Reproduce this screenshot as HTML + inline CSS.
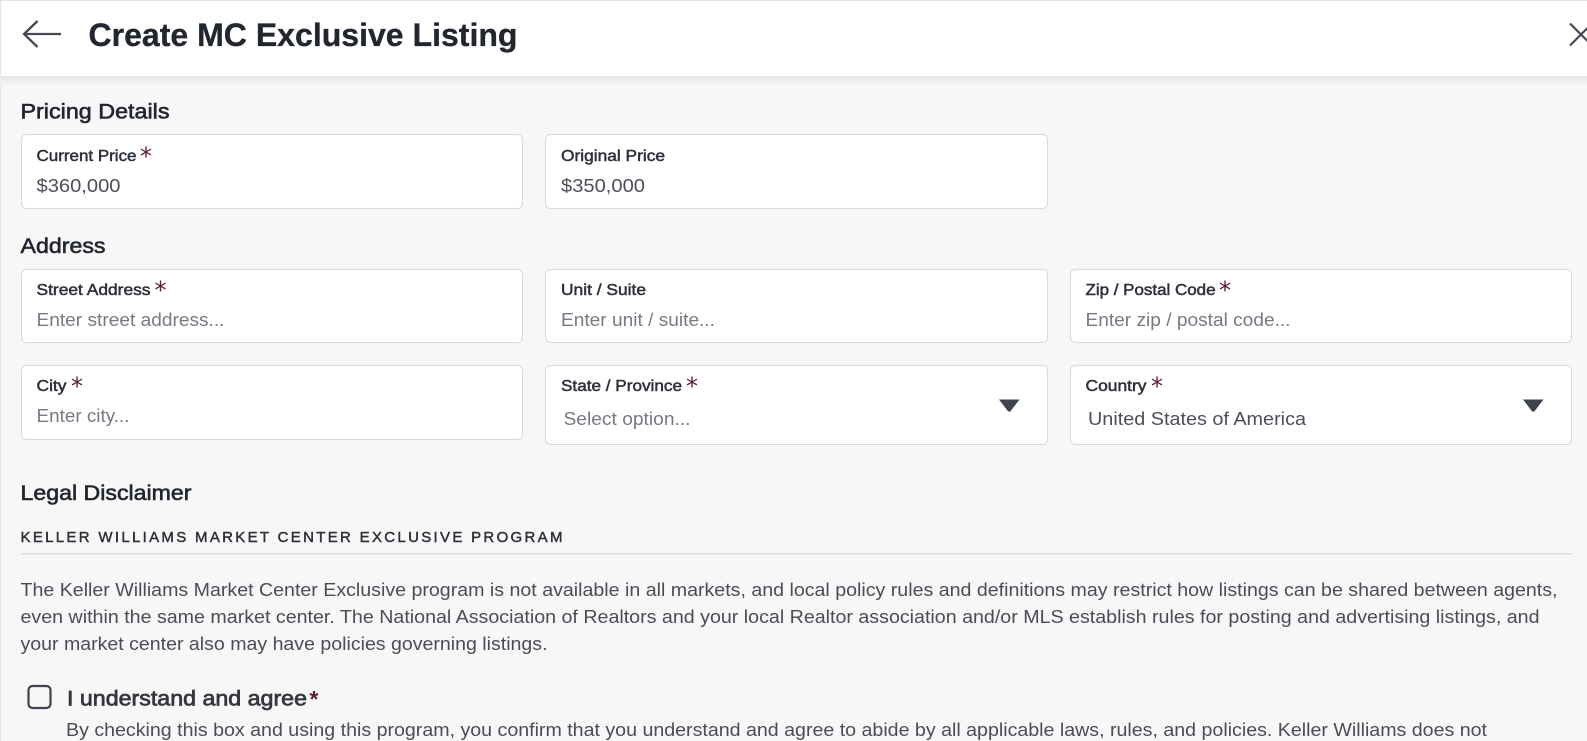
<!DOCTYPE html>
<html lang="en">
<head>
<meta charset="utf-8">
<title>Create MC Exclusive Listing</title>
<style>
html,body{margin:0;padding:0;width:1587px;height:741px;overflow:hidden;background:#f7f7f7}
svg{display:block;position:absolute;left:0;top:0}
text{font-family:"Liberation Sans",sans-serif;white-space:pre}
.lb{font-size:16px;fill:#2d303a;stroke:#2d303a;stroke-width:.5px}
.v{font-size:18px;fill:#4c4f59}
.ph{font-size:18px;fill:#777a83}
.h{font-size:21.5px;fill:#22262e;stroke:#22262e;stroke-width:.6px}
.p{font-size:18.2px;fill:#4a4d57}
.st{font-size:24px;fill:#5e1a2a;font-family:"DejaVu Sans",sans-serif}
rect.b{fill:#fff;stroke:#d9d9d9;stroke-width:1}
</style>
</head>
<body>
<svg width="1587" height="741" viewBox="0 0 1587 741" xmlns="http://www.w3.org/2000/svg">
<defs>
<linearGradient id="sh" x1="0" y1="0" x2="0" y2="1"><stop offset="0" stop-color="#e6e6e6"/><stop offset="1" stop-color="#f7f7f7"/></linearGradient>
</defs>
<rect x="0" y="0" width="1587" height="741" fill="#f7f7f7"/>
<rect x="0" y="0" width="1" height="741" fill="#e1e5ea"/>
<rect x="0" y="76" width="1587" height="10" fill="url(#sh)"/>
<rect x="1" y="1" width="1586" height="75" fill="#fff"/>
<rect x="0" y="0" width="1587" height="1" fill="#e1e5ea"/>
<rect x="0" y="0" width="1" height="76" fill="#e1e5ea"/>

<path d="M61 34H24.5M37.5 21L24 34l13.5 13" fill="none" stroke="#444852" stroke-width="2.3"/>
<text x="88.5" y="46" font-size="32" font-weight="700" fill="#22262e" stroke="#22262e" stroke-width=".3" textLength="429" lengthAdjust="spacingAndGlyphs">Create MC Exclusive Listing</text>
<path d="M1570 23.5l22 22M1570 45.5l22-22" fill="none" stroke="#444852" stroke-width="2.2"/>

<text class="h" x="20.5" y="118.500" textLength="149" lengthAdjust="spacingAndGlyphs">Pricing Details</text>
<rect class="b" x="21.5" y="134.5" width="501" height="74" rx="5"/>
<text class="lb" x="36.5" y="161" textLength="100" lengthAdjust="spacingAndGlyphs">Current Price</text>
<text class="st" x="140" y="164.500">*</text>
<text class="v" x="36.5" y="192" textLength="84" lengthAdjust="spacingAndGlyphs">$360,000</text>
<rect class="b" x="545.5" y="134.5" width="502" height="74" rx="5"/>
<text class="lb" x="561" y="161" textLength="104" lengthAdjust="spacingAndGlyphs">Original Price</text>
<text class="v" x="561" y="192" textLength="84" lengthAdjust="spacingAndGlyphs">$350,000</text>

<text class="h" x="20.5" y="253" textLength="85" lengthAdjust="spacingAndGlyphs">Address</text>
<rect class="b" x="21.5" y="269.5" width="501" height="73" rx="5"/>
<text class="lb" x="36.5" y="295" textLength="114" lengthAdjust="spacingAndGlyphs">Street Address</text>
<text class="st" x="154.500" y="298.500">*</text>
<text class="ph" x="36.5" y="326" textLength="188" lengthAdjust="spacingAndGlyphs">Enter street address...</text>
<rect class="b" x="545.5" y="269.5" width="502" height="73" rx="5"/>
<text class="lb" x="561" y="295" textLength="85" lengthAdjust="spacingAndGlyphs">Unit / Suite</text>
<text class="ph" x="561" y="326" textLength="154" lengthAdjust="spacingAndGlyphs">Enter unit / suite...</text>
<rect class="b" x="1070.5" y="269.5" width="501" height="73" rx="5"/>
<text class="lb" x="1085.5" y="295" textLength="130" lengthAdjust="spacingAndGlyphs">Zip / Postal Code</text>
<text class="st" x="1219" y="298.500">*</text>
<text class="ph" x="1085.5" y="326" textLength="205" lengthAdjust="spacingAndGlyphs">Enter zip / postal code...</text>

<rect class="b" x="21.5" y="365.5" width="501" height="74" rx="5"/>
<text class="lb" x="36.5" y="391" textLength="30" lengthAdjust="spacingAndGlyphs">City</text>
<text class="st" x="71" y="394.500">*</text>
<text class="ph" x="36.5" y="422" textLength="93" lengthAdjust="spacingAndGlyphs">Enter city...</text>
<rect class="b" x="545.5" y="365.5" width="502" height="79" rx="5"/>
<text class="lb" x="561" y="391" textLength="121" lengthAdjust="spacingAndGlyphs">State / Province</text>
<text class="st" x="686" y="394.500">*</text>
<text class="ph" x="563.5" y="425" textLength="127" lengthAdjust="spacingAndGlyphs">Select option...</text>
<path d="M999 399.500h20.500l-8.800 11.500a1.800 1.800 0 0 1-2.900 0z" fill="#3f434d"/>
<rect class="b" x="1070.5" y="365.500" width="501" height="79" rx="5"/>
<text class="lb" x="1085.5" y="391" textLength="61" lengthAdjust="spacingAndGlyphs">Country</text>
<text class="st" x="1151" y="394.500">*</text>
<text class="v" x="1088" y="425" textLength="218" lengthAdjust="spacingAndGlyphs">United States of America</text>
<path d="M1523 399.500h20.500l-8.800 11.500a1.800 1.800 0 0 1-2.900 0z" fill="#3f434d"/>

<text class="h" x="20.5" y="500" textLength="171" lengthAdjust="spacingAndGlyphs">Legal Disclaimer</text>
<text x="20.5" y="542" font-size="15" fill="#2d303a" stroke="#2d303a" stroke-width=".45" textLength="542" lengthAdjust="spacing">KELLER WILLIAMS MARKET CENTER EXCLUSIVE PROGRAM</text>
<rect x="21" y="553" width="1551" height="1.5" fill="#dedede"/>

<text class="p" x="20.500" y="596" textLength="1537" lengthAdjust="spacingAndGlyphs">The Keller Williams Market Center Exclusive program is not available in all markets, and local policy rules and definitions may restrict how listings can be shared between agents,</text>
<text class="p" x="20.500" y="623" textLength="1519" lengthAdjust="spacingAndGlyphs">even within the same market center. The National Association of Realtors and your local Realtor association and/or MLS establish rules for posting and advertising listings, and</text>
<text class="p" x="20.500" y="650" textLength="527" lengthAdjust="spacingAndGlyphs">your market center also may have policies governing listings.</text>

<rect x="28.500" y="686" width="22" height="22" rx="4" fill="none" stroke="#3f434d" stroke-width="2.200"/>
<text x="67" y="705.500" font-size="21" fill="#34373f" stroke="#34373f" stroke-width=".7" textLength="240" lengthAdjust="spacingAndGlyphs">I understand and agree</text>
<text x="309.500" y="707" font-size="23" font-weight="700" fill="#5e1a2a">*</text>
<text class="p" x="66" y="736" textLength="1421" lengthAdjust="spacingAndGlyphs">By checking this box and using this program, you confirm that you understand and agree to abide by all applicable laws, rules, and policies. Keller Williams does not</text>
</svg>
</body>
</html>
